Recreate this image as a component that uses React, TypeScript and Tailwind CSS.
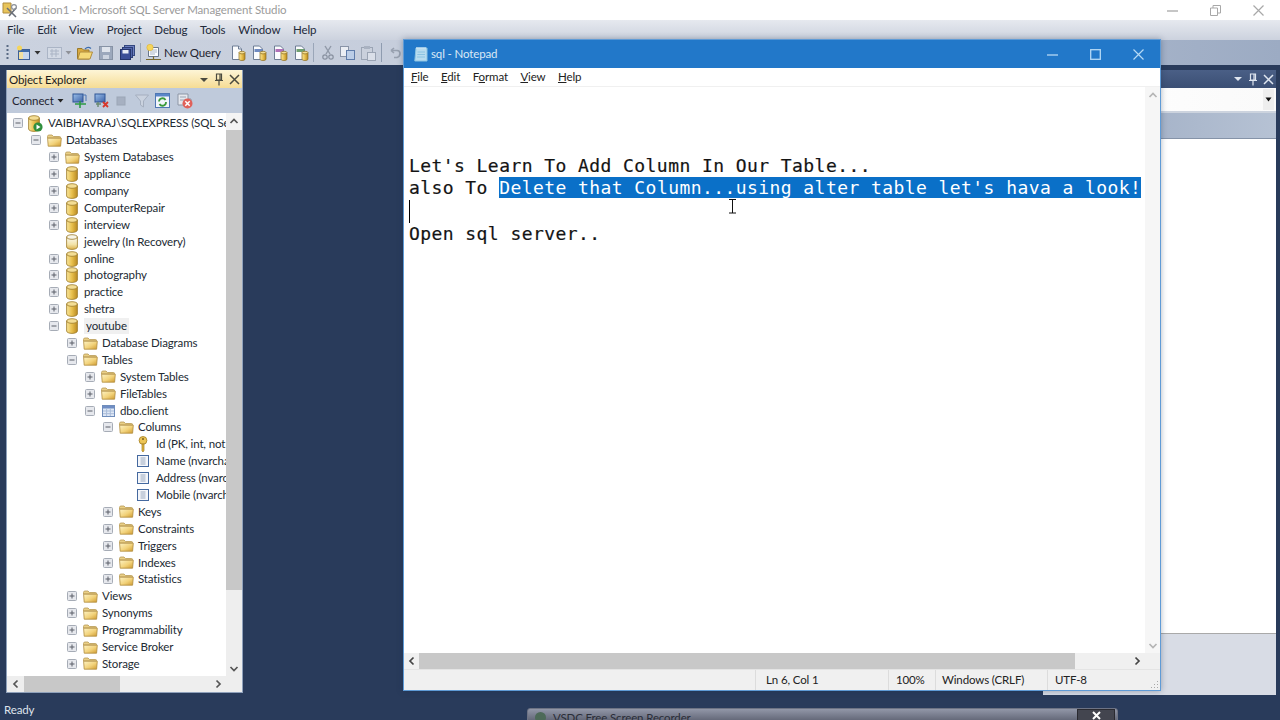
import React from "react";

const FONT = "font-['Lato','Noto_Sans',sans-serif] tracking-[-0.13px]";

function Defs() {
  return (
    <svg className="absolute w-0 h-0" aria-hidden="true">
      <defs>
        <linearGradient id="fold" x1="0" y1="0" x2="1" y2="1">
          <stop offset="0" stopColor="#fdf3c4" />
          <stop offset="0.55" stopColor="#f2d27a" />
          <stop offset="1" stopColor="#cf9a2e" />
        </linearGradient>
        <linearGradient id="cyl" x1="0" y1="0" x2="1" y2="0">
          <stop offset="0" stopColor="#f8e59a" />
          <stop offset="0.5" stopColor="#e8bf4c" />
          <stop offset="1" stopColor="#b98a22" />
        </linearGradient>
        <linearGradient id="cylLight" x1="0" y1="0" x2="0" y2="1">
          <stop offset="0" stopColor="#fbfaf2" />
          <stop offset="0.6" stopColor="#f3e3a8" />
          <stop offset="1" stopColor="#dcb14a" />
        </linearGradient>
        <linearGradient id="blue" x1="0" y1="0" x2="1" y2="1">
          <stop offset="0" stopColor="#9cc0ea" />
          <stop offset="1" stopColor="#3c62a8" />
        </linearGradient>
      </defs>
    </svg>
  );
}

function Expander({ kind }: { kind: string }) {
  if (kind === "") return <span className="w-[10px] h-[10px] shrink-0" />;
  return (
    <svg width="10" height="10" viewBox="0 0 10 10" className="shrink-0">
      <rect x="0.5" y="0.5" width="9" height="9" rx="1" fill="#e6e8ed" stroke="#a6acb6" />
      <path d="M2.5 5h5" stroke="#5a5f68" />
      {kind === "+" && <path d="M5 2.5v5" stroke="#5a5f68" />}
    </svg>
  );
}

function Folder() {
  return (
    <svg width="15" height="13" viewBox="0 0 15 13" className="ml-px">
      <path d="M.5 2.5 Q.5 1 2 1H5L6.5 2.5H12.5Q13.5 2.5 13.5 3.5V4H.5Z" fill="#e9cf86" stroke="#b79a55" strokeWidth="0.8" />
      <path d="M.6 4.2H14.3L13.6 12.2H1.2Z" fill="url(#fold)" stroke="#b08c3e" strokeWidth="0.8" />
    </svg>
  );
}

function Db({ light }: { light?: boolean }) {
  return (
    <svg width="12" height="16" viewBox="0 0 12 16" className="ml-[2px]">
      <path d="M.6 3V13C.6 14.3 3 15.4 6 15.4S11.4 14.3 11.4 13V3Z" fill={light ? "url(#cylLight)" : "url(#cyl)"} stroke="#9c7a28" strokeWidth="0.8" />
      <ellipse cx="6" cy="3" rx="5.4" ry="2.3" fill={light ? "#f7f4e6" : "#f3dd94"} stroke="#9c7a28" strokeWidth="0.8" />
    </svg>
  );
}

function Server() {
  return (
    <svg width="15" height="17" viewBox="0 0 15 17">
      <path d="M.6 3V14C.6 15.3 3 16.4 6 16.4S11.4 15.3 11.4 14V3Z" fill="url(#cyl)" stroke="#9c7a28" strokeWidth="0.8" />
      <ellipse cx="6" cy="3" rx="5.4" ry="2.3" fill="#f3dd94" stroke="#9c7a28" strokeWidth="0.8" />
      <circle cx="10" cy="12" r="4.6" fill="#2f8f3c" />
      <path d="M8.5 9.6 12.5 12 8.5 14.4Z" fill="#fff" />
    </svg>
  );
}

function TableIcon() {
  return (
    <svg width="13" height="12" viewBox="0 0 13 12" className="ml-[2px]">
      <rect x=".5" y=".5" width="12" height="11" fill="#dfe8f5" stroke="#6f8dbb" />
      <rect x="1" y="1" width="11" height="2.5" fill="#6f8dc4" />
      <path d="M1 6h11M1 8.7h11M4.6 3.5V11M8.3 3.5V11" stroke="#a9bcd9" />
    </svg>
  );
}

function ColIcon() {
  return (
    <svg width="12" height="12" viewBox="0 0 12 12" className="ml-px">
      <rect x=".5" y=".5" width="11" height="11" fill="#f4f6fa" stroke="#45699f" />
      <path d="M3.5 3h5M3.5 5h5M3.5 7h5M3.5 9h5" stroke="#9aa9bf" />
    </svg>
  );
}

function KeyIcon() {
  return (
    <svg width="10" height="17" viewBox="0 0 10 17" className="ml-[2px]">
      <circle cx="5" cy="4.4" r="3.9" fill="#ecc455" stroke="#a27d22" strokeWidth="0.8" />
      <circle cx="5" cy="3" r="1" fill="#7a5f1c" />
      <path d="M4 8H6V14.4L5 16 4 14.8Z" fill="#e4b83f" stroke="#a27d22" strokeWidth="0.7" />
    </svg>
  );
}

function RowIcon({ name }: { name: string }) {
  const el =
    name === "folder" ? <Folder /> :
    name === "db" ? <Db /> :
    name === "dbl" ? <Db light /> :
    name === "server" ? <Server /> :
    name === "table" ? <TableIcon /> :
    name === "col" ? <ColIcon /> : <KeyIcon />;
  return <span className="ml-[5px] w-[16px] shrink-0 flex items-center">{el}</span>;
}

const PAD: Record<number, string> = {
  0: "pl-[6px]",
  1: "pl-[24px]",
  2: "pl-[42px]",
  3: "pl-[60px]",
  4: "pl-[78px]",
  5: "pl-[96px]",
  6: "pl-[114px]",
};

const ROWS: [number, string, string, string][] = [
  [0, "-", "server", "VAIBHAVRAJ\\SQLEXPRESS (SQL Server 13.0)"],
  [1, "-", "folder", "Databases"],
  [2, "+", "folder", "System Databases"],
  [2, "+", "db", "appliance"],
  [2, "+", "db", "company"],
  [2, "+", "db", "ComputerRepair"],
  [2, "+", "db", "interview"],
  [2, "", "dbl", "jewelry (In Recovery)"],
  [2, "+", "db", "online"],
  [2, "+", "db", "photography"],
  [2, "+", "db", "practice"],
  [2, "+", "db", "shetra"],
  [2, "-", "db", "youtube"],
  [3, "+", "folder", "Database Diagrams"],
  [3, "-", "folder", "Tables"],
  [4, "+", "folder", "System Tables"],
  [4, "+", "folder", "FileTables"],
  [4, "-", "table", "dbo.client"],
  [5, "-", "folder", "Columns"],
  [6, "", "key", "Id (PK, int, not null)"],
  [6, "", "col", "Name (nvarchar(50), null)"],
  [6, "", "col", "Address (nvarchar(50), null)"],
  [6, "", "col", "Mobile (nvarchar(10), null)"],
  [5, "+", "folder", "Keys"],
  [5, "+", "folder", "Constraints"],
  [5, "+", "folder", "Triggers"],
  [5, "+", "folder", "Indexes"],
  [5, "+", "folder", "Statistics"],
  [3, "+", "folder", "Views"],
  [3, "+", "folder", "Synonyms"],
  [3, "+", "folder", "Programmability"],
  [3, "+", "folder", "Service Broker"],
  [3, "+", "folder", "Storage"],
];

function Chevron({ dir, color = "#555" }: { dir: "up" | "down" | "left" | "right"; color?: string }) {
  const d = {
    up: "M1.5 6 5 2.5 8.5 6",
    down: "M1.5 4 5 7.5 8.5 4",
    left: "M6.5 1.5 3 5 6.5 8.5",
    right: "M3.5 1.5 7 5 3.5 8.5",
  }[dir];
  return (
    <svg width="10" height="10" viewBox="0 0 10 10">
      <path d={d} fill="none" stroke={color} strokeWidth="1.7" />
    </svg>
  );
}

function PaneButtons({ color }: { color: string }) {
  return (
    <div className="flex items-center gap-[5px]">
      <svg width="10" height="10" viewBox="0 0 10 10">
        <path d="M1 3H9L5 7Z" fill={color} />
      </svg>
      <svg width="10" height="13" viewBox="0 0 10 13">
        <path d="M2.5 1H7.5V7H2.5ZM1 7.5H9M5 8V12.5M6 1.5V7" fill="none" stroke={color} strokeWidth="1.2" />
      </svg>
      <svg width="11" height="11" viewBox="0 0 11 11">
        <path d="M1 1 10 10M10 1 1 10" stroke={color} strokeWidth="1.5" />
      </svg>
    </div>
  );
}

function PageIcon({ label, tone }: { label?: string; tone?: string }) {
  return (
    <svg width="16" height="16" viewBox="0 0 16 16">
      <path d="M2.5 1H8.5L11.5 4V14.5H2.5Z" fill="#fbfcfe" stroke="#6d7c94" />
      {label ? (
        <rect x="3.5" y="4" width="8" height="3" fill={tone} />
      ) : (
        <path d="M8.5 1V4H11.5" fill="#dfe6f2" stroke="#6d7c94" />
      )}
      <path d="M9 7.6V14C9 15 10.4 15.5 12 15.5S15 15 15 14V7.6Z" fill="url(#cyl)" stroke="#8e6f20" strokeWidth="0.7" />
      <ellipse cx="12" cy="7.6" rx="3" ry="1.3" fill="#f3dd94" stroke="#8e6f20" strokeWidth="0.7" />
    </svg>
  );
}

function TopToolbar() {
  return (
    <div className="h-[25px] shrink-0 flex items-center pl-[6px] bg-gradient-to-r from-[#cbd2df] via-[#c3cbda] to-[#9cabc3]">
      <svg width="3" height="17" viewBox="0 0 3 17" className="shrink-0">
        <path d="M1.5 1v2M1.5 5v2M1.5 9v2M1.5 13v2" stroke="#5a6a84" strokeWidth="2" />
      </svg>
      <svg width="15" height="16" viewBox="0 0 15 16" className="ml-[7px]">
        <rect x="2.5" y="4.5" width="11" height="10" fill="#c5d6ee" stroke="#3d6098" />
        <rect x="3" y="5" width="10" height="2" fill="#3d6aa8" />
        <rect x="3" y="7" width="4" height="7" fill="#f1dfa0" />
        <circle cx="3.5" cy="3" r="2.5" fill="#f5d55c" />
      </svg>
      <svg width="7" height="5" viewBox="0 0 7 5" className="ml-[3px]">
        <path d="M.5 1H6.5L3.5 4.5Z" fill="#333" />
      </svg>
      <svg width="15" height="14" viewBox="0 0 15 14" className="ml-[6px] opacity-45">
        <rect x=".5" y="1.5" width="14" height="11" fill="#dfe5ee" stroke="#8593a8" />
        <path d="M3 5h9M3 8h9M5 3v8M9 3v8" stroke="#8593a8" />
      </svg>
      <svg width="7" height="5" viewBox="0 0 7 5" className="ml-[3px] opacity-50">
        <path d="M.5 1H6.5L3.5 4.5Z" fill="#555" />
      </svg>
      <svg width="16" height="14" viewBox="0 0 16 14" className="ml-[5px]">
        <path d="M.5 2.5H5L6.5 4H12V13H.5Z" fill="#d9a93f" stroke="#9a7a2b" />
        <path d="M3 6H15.5L13 13H.8Z" fill="#f5d978" stroke="#b08c3e" />
        <path d="M8 3 Q11 0 14 2.5" fill="none" stroke="#3b6cb0" strokeWidth="1.2" />
      </svg>
      <svg width="14" height="14" viewBox="0 0 14 14" className="ml-[6px] opacity-60">
        <rect x=".5" y=".5" width="13" height="13" fill="#7f8ea6" stroke="#5c6a80" />
        <rect x="3" y="1" width="8" height="5" fill="#eef1f6" />
        <rect x="4" y="9" width="6" height="4" fill="#cfd6e2" />
      </svg>
      <svg width="15" height="15" viewBox="0 0 15 15" className="ml-[7px]">
        <rect x="4.5" y=".5" width="10" height="10" fill="#6d7fc0" stroke="#33477f" />
        <rect x="2.5" y="2.5" width="10" height="10" fill="#5266ac" stroke="#2c3e78" />
        <rect x=".5" y="4.5" width="10" height="10" fill="#3c4f98" stroke="#24346c" />
        <rect x="2.5" y="5" width="6" height="3.5" fill="#e8ecf6" />
      </svg>
      <span className="ml-[5px] w-px h-[19px] bg-[#9aa6b8]" />
      <svg width="17" height="17" viewBox="0 0 17 17" className="ml-[4px]">
        <path d="M3.5 3.5H13.5V12.5H3.5Z" fill="#fbfcfe" stroke="#69778d" />
        <path d="M5 6h7M5 8h7M5 10h5" stroke="#aab5c6" />
        <circle cx="5" cy="3.5" r="3.2" fill="#f5d55c" stroke="#d5a92e" strokeWidth="0.5" />
        <path d="M1 15.5H16M8.5 12.5V15.5" stroke="#7b6a2c" strokeWidth="1.2" />
      </svg>
      <span className={`ml-[2px] text-[11.5px] leading-none text-[#1e2430] whitespace-nowrap w-[56px] ${FONT}`}>New Query</span>
      <div className="ml-[10px] flex items-center gap-[5px]">
        <PageIcon />
        <PageIcon label="7" tone="#6f8ac0" />
        <PageIcon label="8" tone="#b070b8" />
        <PageIcon label="9" tone="#6f9f70" />
      </div>
      <span className="ml-[4px] w-px h-[19px] bg-[#9aa6b8]" />
      <svg width="12" height="15" viewBox="0 0 12 15" className="ml-[8px] opacity-50">
        <path d="M3 1 8 9M9 1 4 9" stroke="#5a6474" strokeWidth="1.4" />
        <circle cx="3" cy="12" r="2.2" fill="none" stroke="#4a5464" strokeWidth="1.2" />
        <circle cx="9" cy="12" r="2.2" fill="none" stroke="#4a5464" strokeWidth="1.2" />
      </svg>
      <svg width="15" height="14" viewBox="0 0 15 14" className="ml-[6px] opacity-80">
        <rect x=".5" y=".5" width="8" height="10" fill="#f4f6fa" stroke="#7a869a" />
        <rect x="6.5" y="4.5" width="8" height="9" fill="#b9cdea" stroke="#46689e" />
      </svg>
      <svg width="16" height="16" viewBox="0 0 16 16" className="ml-[5px] opacity-50">
        <rect x="1.5" y="2.5" width="11" height="12" fill="#cdd3dd" stroke="#707b8d" />
        <rect x="4" y="1" width="6" height="3" fill="#8d97a8" />
        <rect x="7.5" y="7.5" width="8" height="8" fill="#eef1f6" stroke="#707b8d" />
      </svg>
      <span className="ml-[5px] w-px h-[19px] bg-[#8f9cb0]" />
      <svg width="11" height="12" viewBox="0 0 11 12" className="ml-[8px] opacity-50">
        <path d="M1 3.5H7Q10 3.5 10 6.5T7 10.5H4M1 3.5 4 1M1 3.5 4 6" fill="none" stroke="#6a7484" strokeWidth="1.6" />
      </svg>
    </div>
  );
}

function ExplorerTools() {
  return (
    <div className="h-[25px] shrink-0 flex items-center pl-[5px] bg-[#bfcadb]">
      <span className={`text-[11.5px] leading-none text-[#1e2430] w-[44px] ${FONT}`}>Connect</span>
      <svg width="7" height="5" viewBox="0 0 7 5" className="ml-[1px]">
        <path d="M.5 1H6.5L3.5 4.5Z" fill="#222" />
      </svg>
      <svg width="15" height="15" viewBox="0 0 15 15" className="ml-[8px]">
        <rect x="1" y="1" width="10" height="8" fill="url(#blue)" stroke="#2f5595" />
        <path d="M3 11H14M8 8V15" stroke="#2f9a45" strokeWidth="1.6" />
        <path d="M11 2H14V8" stroke="#4b74b5" fill="none" />
      </svg>
      <svg width="15" height="15" viewBox="0 0 15 15" className="ml-[7px]">
        <rect x="1" y="1" width="10" height="8" fill="url(#blue)" stroke="#2f5595" />
        <path d="M2 11H7M4 9V14" stroke="#6a8a70" strokeWidth="1.4" />
        <path d="M9 9 14 14M14 9 9 14" stroke="#d8362a" strokeWidth="1.8" />
      </svg>
      <svg width="10" height="10" viewBox="0 0 10 10" className="ml-[7px] opacity-50">
        <rect x="1" y="1" width="8" height="8" fill="#8e98a8" stroke="#7a8494" />
      </svg>
      <svg width="14" height="14" viewBox="0 0 14 14" className="ml-[9px] opacity-50">
        <path d="M.5 1H13.5L8.5 7V13L5.5 11V7Z" fill="#d6dbe3" stroke="#8d96a5" />
      </svg>
      <svg width="15" height="15" viewBox="0 0 15 15" className="ml-[6px]">
        <rect x=".5" y=".5" width="14" height="14" fill="#f2f5fb" stroke="#4f77b4" />
        <rect x="1" y="1" width="13" height="2.5" fill="#5a86c8" />
        <path d="M4 8.5A3.5 3.5 0 0 1 10.5 7M11 9A3.5 3.5 0 0 1 4.5 11" fill="none" stroke="#3c9a3c" strokeWidth="1.8" />
      </svg>
      <svg width="16" height="16" viewBox="0 0 16 16" className="ml-[7px]">
        <path d="M1 1H11V6H14V12H1Z" fill="#e5e8ee" stroke="#8d96a5" />
        <path d="M3 4H9M3 7H9" stroke="#9aa3b2" />
        <circle cx="10.5" cy="10.5" r="5" fill="#e0615a" />
        <path d="M8.3 8.3 12.7 12.7M12.7 8.3 8.3 12.7" stroke="#fff" strokeWidth="1.5" />
      </svg>
    </div>
  );
}

function ObjectExplorer() {
  return (
    <section className="w-[237px] h-[623px] ml-[6px] mt-[5px] flex flex-col border border-[#8fa1bb] border-t-0 bg-white">
      <div className="h-[18px] shrink-0 flex items-center justify-between pl-[2px] pr-[2px] pt-px bg-gradient-to-b from-[#fdf5d6] to-[#f6dc94]">
        <span className={`text-[11.5px] leading-none text-[#1c1c1c] ${FONT}`}>Object Explorer</span>
        <PaneButtons color="#4a4a3f" />
      </div>
      <ExplorerTools />
      <div className="flex-1 flex min-h-0">
        <div className="w-[219px] pt-[2px] overflow-hidden">
          {ROWS.map(([depth, exp, icon, text], i) => (
            <div key={i} className={`h-[16.9px] flex items-center whitespace-nowrap ${PAD[depth]}`}>
              <Expander kind={exp} />
              <RowIcon name={icon} />
              <span
                className={`ml-[4px] text-[11.5px] leading-[16px] text-[#222a33] ${FONT} ${text === "youtube" ? "bg-[#f0f0f0] -ml-[1px] px-[2px]" : ""}`}
              >
                {text}
              </span>
            </div>
          ))}
        </div>
        <div className="w-[16px] flex flex-col bg-[#eeeeee]">
          <div className="h-[17px] flex items-center justify-center bg-[#f4f4f4]"><Chevron dir="up" /></div>
          <div className="h-[460px] bg-[#c8c8c8]" />
          <div className="flex-1" />
          <div className="h-[17px] flex items-center justify-center"><Chevron dir="down" /></div>
        </div>
      </div>
      <div className="h-[16px] shrink-0 flex items-center bg-[#eeeeee]">
        <div className="w-[17px] flex justify-center"><Chevron dir="left" /></div>
        <div className="w-[96px] h-full bg-[#c8c8c8]" />
        <div className="flex-1" />
        <div className="w-[34px] flex justify-center pr-[14px]"><Chevron dir="right" /></div>
      </div>
    </section>
  );
}

function RightPanel() {
  return (
    <section className="w-[233px] h-[625px] mt-[5px] mr-[4px] flex flex-col bg-[#d8dce5]">
      <div className="h-[18px] shrink-0 flex items-center justify-end pr-[2px] bg-gradient-to-b from-[#4a5f86] to-[#3b4f74]">
        <PaneButtons color="#dfe6f0" />
      </div>
      <div className="h-[25px] shrink-0 flex items-center justify-end pr-[2px] bg-gradient-to-r from-[#ffffff] to-[#fafafa] border-b-2 border-[#ccd3de]">
        <span className="w-[11px] h-[21px] flex items-center justify-center bg-[#eeeeee]">
          <svg width="7" height="5" viewBox="0 0 7 5"><path d="M.5.5H6.5L3.5 4.5Z" fill="#111" /></svg>
        </span>
      </div>
      <div className="h-[26px] shrink-0 bg-gradient-to-r from-[#98a7bf] to-[#b6c2d4] border-b border-[#8593a8]" />
      <div className="h-[495px] shrink-0 bg-white border-b border-[#a9a9a9]" />
    </section>
  );
}

function WinControls({ color, big }: { color: string; big?: boolean }) {
  return (
    <div className="flex items-center gap-[32px] pr-[16px]">
      <svg width="11" height="11" viewBox="0 0 11 11"><path d="M0 6H11" stroke={color} strokeWidth="1.3" /></svg>
      {big ? (
        <svg width="11" height="11" viewBox="0 0 11 11"><rect x=".7" y=".7" width="9.6" height="9.6" fill="none" stroke={color} strokeWidth="1.3" /></svg>
      ) : (
        <svg width="11" height="11" viewBox="0 0 11 11"><path d="M.5 3H7.5V10.5H.5ZM3 3V.5H10.5V8H7.5" fill="none" stroke={color} /></svg>
      )}
      <svg width="11" height="11" viewBox="0 0 11 11"><path d="M.5.5 10.5 10.5M10.5.5 .5 10.5" stroke={color} strokeWidth="1.2" /></svg>
    </div>
  );
}

function Notepad() {
  return (
    <div className="absolute left-[403px] top-[39px] w-[758px] h-[652px] flex flex-col bg-white border border-[#5f9bd6] shadow-[0_0_6px_rgba(20,40,70,0.35)]">
      <div className="h-[28px] shrink-0 flex items-center justify-between bg-[#2278c9]">
        <div className="flex items-center pl-[10px]">
          <svg width="15" height="16" viewBox="0 0 15 16">
            <path d="M2 2H13V15H0.8Z" fill="#b9dcef" stroke="#8cc4e2" />
            <path d="M3 1V3M5 1V3M7 1V3M9 1V3M11 1V3" stroke="#e7f3fa" />
            <path d="M3.5 6H11M3.3 8.5H11M3 11H11" stroke="#8cc4e2" />
          </svg>
          <span className={`ml-[2px] text-[11.5px] leading-none text-[#dbe9f6] ${FONT}`}>sql - Notepad</span>
        </div>
        <WinControls color="#b5d9f5" big />
      </div>
      <div className={`h-[18px] shrink-0 flex items-center pl-[7px] gap-[12.5px] text-[11.5px] leading-none text-[#222] ${FONT}`}>
        <span><span className="underline">F</span>ile</span>
        <span><span className="underline">E</span>dit</span>
        <span>F<span className="underline">o</span>rmat</span>
        <span><span className="underline">V</span>iew</span>
        <span><span className="underline">H</span>elp</span>
      </div>
      <div className="flex-1 min-h-0 flex border-t border-[#f0f0f0]">
        <div className="flex-1 pl-[5px] font-['DejaVu_Sans_Mono','Liberation_Mono',monospace] text-[18px] tracking-[0.43px] leading-[22.6px] text-[#141414] [-webkit-text-stroke:0.2px_#141414] whitespace-pre overflow-hidden">
          <div className="h-[22.6px]" />
          <div className="h-[22.6px]" />
          <div className="h-[22.6px]" />
          <div className="h-[22.6px]">Let's Learn To Add Column In Our Table...</div>
          <div className="h-[22.6px]">also To <span className="bg-[#0a70c8] text-white [-webkit-text-stroke:0px_#ffffff]">Delete that Column...using alter table let's hava a look!</span></div>
          <div className="h-[22.6px] flex"><span className="w-px h-[22.6px] bg-black" /></div>
          <div className="h-[22.6px]">Open sql server..</div>
        </div>
        <div className="w-[15px] flex flex-col justify-between bg-[#f6f6f6]">
          <div className="h-[17px] flex items-center justify-center"><Chevron dir="up" color="#b4b4b4" /></div>
          <div className="h-[17px] flex items-center justify-center"><Chevron dir="down" color="#b4b4b4" /></div>
        </div>
      </div>
      <div className="h-[16px] shrink-0 flex items-center bg-[#f0f0f0]">
        <div className="w-[15px] flex justify-center"><Chevron dir="left" color="#444" /></div>
        <div className="w-[656px] h-full bg-[#c8c8c8]" />
        <div className="flex-1 flex justify-end pr-[18px]"><Chevron dir="right" color="#444" /></div>
      </div>
      <div className={`h-[21px] shrink-0 flex items-center justify-end bg-[#f0f0f0] border-t border-[#e4e4e4] text-[11.5px] leading-none text-[#222] ${FONT}`}>
        <span className="w-[133px] h-full flex items-center pl-[10px] border-l border-[#dcdcdc]">Ln 6, Col 1</span>
        <span className="w-[47px] h-full flex items-center pl-[7px] border-l border-[#dcdcdc]">100%</span>
        <span className="w-[112px] h-full flex items-center pl-[6px] border-l border-[#dcdcdc]">Windows (CRLF)</span>
        <span className="w-[113px] h-full flex items-center pl-[7px] border-l border-[#dcdcdc]">UTF-8</span>
      </div>
      <svg width="10" height="10" viewBox="0 0 10 10" className="absolute right-[1px] bottom-[1px]">
        <path d="M8 2h1v1H8zM5 5h1v1H5zM8 5h1v1H8zM2 8h1v1H2zM5 8h1v1H5zM8 8h1v1H8z" fill="#a8a8a8" />
      </svg>
    </div>
  );
}

export default function App() {
  return (
    <div className={`relative w-[1280px] h-[720px] overflow-hidden flex flex-col bg-[#293b5b] ${FONT}`}>
      <Defs />
      <div className="h-[20px] shrink-0 flex items-center justify-between bg-white">
        <div className="flex items-center pl-[2px]">
          <svg width="16" height="16" viewBox="0 0 16 16">
            <path d="M1 1H9V11H1Z" fill="#e8c45a" stroke="#b08c3e" />
            <path d="M5 6 14 15M14 6 7 14" stroke="#6a6f78" strokeWidth="1.6" />
            <circle cx="12" cy="5" r="2.4" fill="none" stroke="#8a8f98" strokeWidth="1.2" />
          </svg>
          <span className="ml-[4px] text-[11.5px] leading-none text-[#9b9b9b]">Solution1 - Microsoft SQL Server Management Studio</span>
        </div>
        <WinControls color="#a8a8a8" />
      </div>
      <div className="h-[20px] shrink-0 flex items-center pl-[7px] gap-[12.7px] text-[11.5px] leading-none text-[#22293a] bg-gradient-to-b from-[#e6e9ef] to-[#ccd2de]">
        <span>File</span>
        <span>Edit</span>
        <span>View</span>
        <span>Project</span>
        <span>Debug</span>
        <span>Tools</span>
        <span>Window</span>
        <span>Help</span>
      </div>
      <TopToolbar />
      <main className="flex-1 min-h-0 flex justify-between items-start">
        <ObjectExplorer />
        <RightPanel />
      </main>
      <footer className="h-[20px] shrink-0 flex items-center pl-[4px] text-[11.5px] leading-none text-[#dfe4ec]">Ready</footer>
      <Notepad />
      <div className="absolute left-[527px] top-[708px] w-[591px] h-[20px] flex items-start justify-between rounded-t-[3px] border border-[#6d7384] bg-gradient-to-b from-[#9297a8] to-[#4a4e5e]">
        <div className="flex items-center pl-[7px] pt-[3px]">
          <span className="w-[11px] h-[11px] rounded-full bg-[#4d6a58]" />
          <span className="ml-[7px] text-[11.5px] leading-none text-[#2a2d38]">VSDC Free Screen Recorder</span>
        </div>
        <div className="w-[38px] h-[12px] mr-[2px] flex items-center justify-center bg-[#43454f] border border-[#2a2a30]">
          <svg width="9" height="9" viewBox="0 0 9 9"><path d="M1 1 8 8M8 1 1 8" stroke="#fff" strokeWidth="2" /></svg>
        </div>
      </div>
      <svg width="9" height="15" viewBox="0 0 9 15" className="absolute left-[728px] top-[199px]">
        <path d="M1 .5H8M4.5 .5V14M1 14H8" stroke="#111" />
      </svg>
    </div>
  );
}
